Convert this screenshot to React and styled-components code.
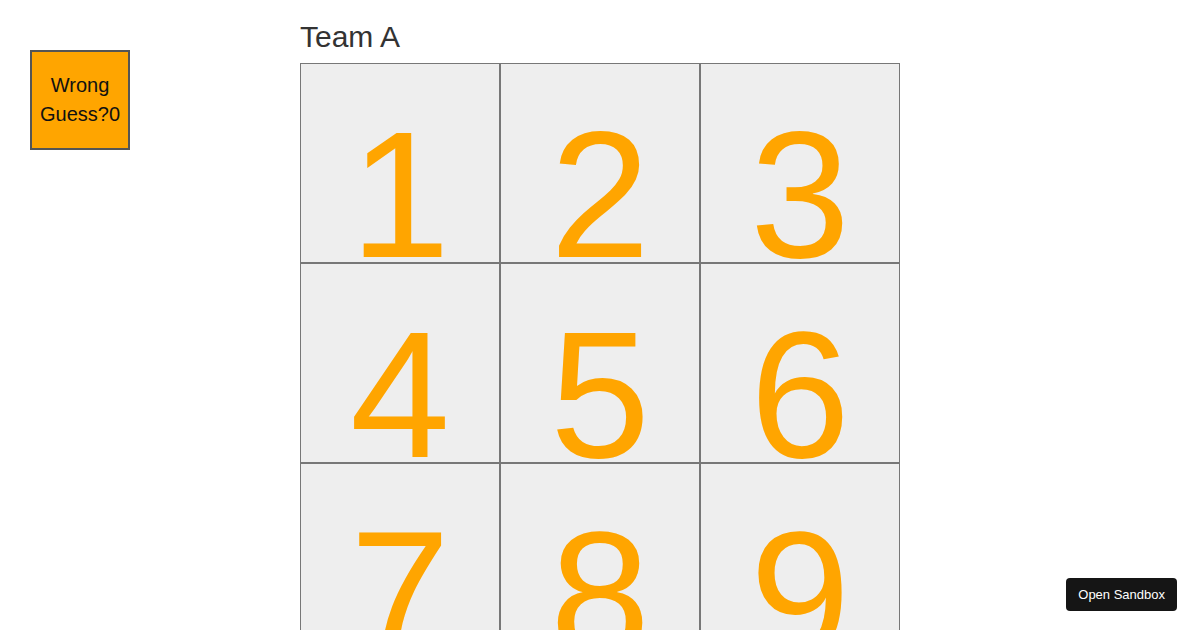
import React, { useState } from 'react';
import styled, { createGlobalStyle } from 'styled-components';

const GlobalStyle = createGlobalStyle`
  html, body {
    margin: 0;
    padding: 0;
    background: #fff;
    overflow: hidden;
  }
  body {
    font-family: "Liberation Sans", Arial, sans-serif;
  }
`

const Page = styled.div`
  display: flex;
  align-items: flex-start;
`

const GuessBox = styled.div`
  box-sizing: border-box;
  width: 100px;
  height: 100px;
  margin: 50px 0 0 30px;
  background-color: #ffa500;
  border: 2px solid #555;
  display: flex;
  align-items: center;
  justify-content: center;
  text-align: center;
  font-size: 20px;
  line-height: 29px;
  color: #111;
  cursor: pointer;
`

const NoBreak = styled.span`
  white-space: nowrap;
`

const Board = styled.div`
  margin-left: 170px;
`

const Title = styled.h2`
  margin: 20px 0 9px 0;
  font-size: 30px;
  font-weight: normal;
  color: #333;
`

const Grid = styled.div`
  display: grid;
  grid-template-columns: repeat(3, 200px);
  grid-auto-rows: 200px;
`

const Cell = styled.div`
  box-sizing: border-box;
  border: 1px solid #777;
  background-color: #eee;
  color: #ffa500;
  font-size: 180px;
  text-align: center;
  padding-top: 27px;
  cursor: pointer;
`

const SandboxButton = styled.button`
  position: fixed;
  right: 23px;
  bottom: 19px;
  height: 33px;
  padding: 0 12px;
  background: #151515;
  color: #fff;
  border: none;
  border-radius: 4px;
  font-family: "Liberation Sans", Arial, sans-serif;
  font-size: 13px;
  cursor: pointer;
`

const numbers = [1, 2, 3, 4, 5, 6, 7, 8, 9]

export default function App() {
  const [wrong, setWrong] = useState(0)

  return (
    <>
      <GlobalStyle />
      <Page>
        <GuessBox onClick={() => setWrong(wrong + 1)}>
          <span>Wrong <NoBreak>Guess?{wrong}</NoBreak></span>
        </GuessBox>
        <Board>
          <Title>Team A</Title>
          <Grid>
            {numbers.map(n => (
              <Cell key={n}>{n}</Cell>
            ))}
          </Grid>
        </Board>
      </Page>
      <SandboxButton>Open Sandbox</SandboxButton>
    </>
  )
}
